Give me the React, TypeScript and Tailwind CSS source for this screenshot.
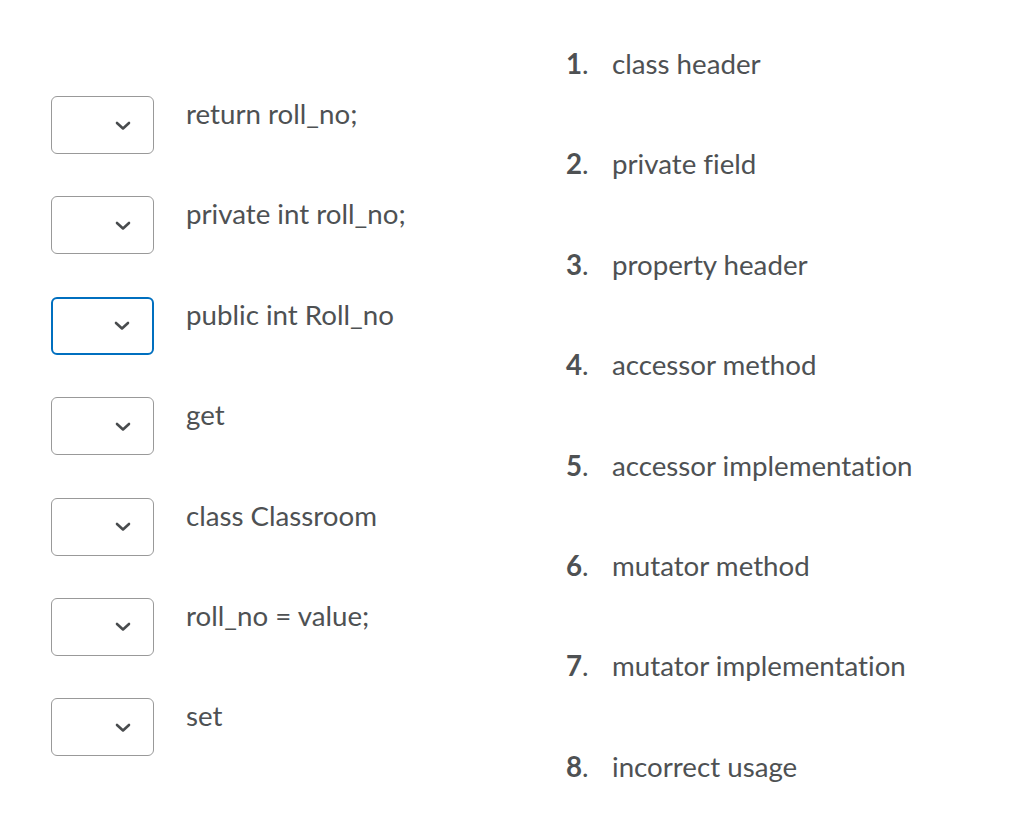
import React from "react";

const left = [
  "return roll_no;",
  "private int roll_no;",
  "public int Roll_no",
  "get",
  "class Classroom",
  "roll_no = value;",
  "set",
];

const right = [
  "class header",
  "private field",
  "property header",
  "accessor method",
  "accessor implementation",
  "mutator method",
  "mutator implementation",
  "incorrect usage",
];

function Chevron() {
  return (
    <svg width="16" height="10" viewBox="0 0 16 10" fill="none">
      <path d="M2 2 L8 7.5 L14 2" stroke="#494c4e" strokeWidth="2.6" strokeLinecap="round" strokeLinejoin="round" />
    </svg>
  );
}

export default function App() {
  return (
    <div
      className="w-[1024px] h-[825px] bg-white text-[#4e5153] relative [font-variant-ligatures:none]"
      style={{ fontFamily: "Lato, 'Noto Sans', sans-serif" }}
    >
      <div className="flex">
        <div className="pl-[51px] pt-[96px] w-[566px] flex flex-col">
          {left.map((t, i) => (
            <div key={i} className="flex h-[100.4px]">
              <div
                className={
                  "w-[103px] h-[58px] rounded-[6px] bg-white flex items-center justify-end pr-[22px] pt-[1px] " +
                  (i === 2 ? "border-2 border-[#006fbf]" : "border border-[#999999]")
                }
              >
                <Chevron />
              </div>
              <div className="ml-[32px] mt-[1px] text-[27.7px] leading-[34px]">{t}</div>
            </div>
          ))}
        </div>
        <div className="pt-[47px] flex flex-col">
          {right.map((t, i) => (
            <div key={i} className="flex h-[100.4px] text-[27.7px] leading-[34px]">
              <span className="w-[46px]">
                <span className="font-bold">{i + 1}</span>.
              </span>
              <span>{t}</span>
            </div>
          ))}
        </div>
      </div>
    </div>
  );
}
